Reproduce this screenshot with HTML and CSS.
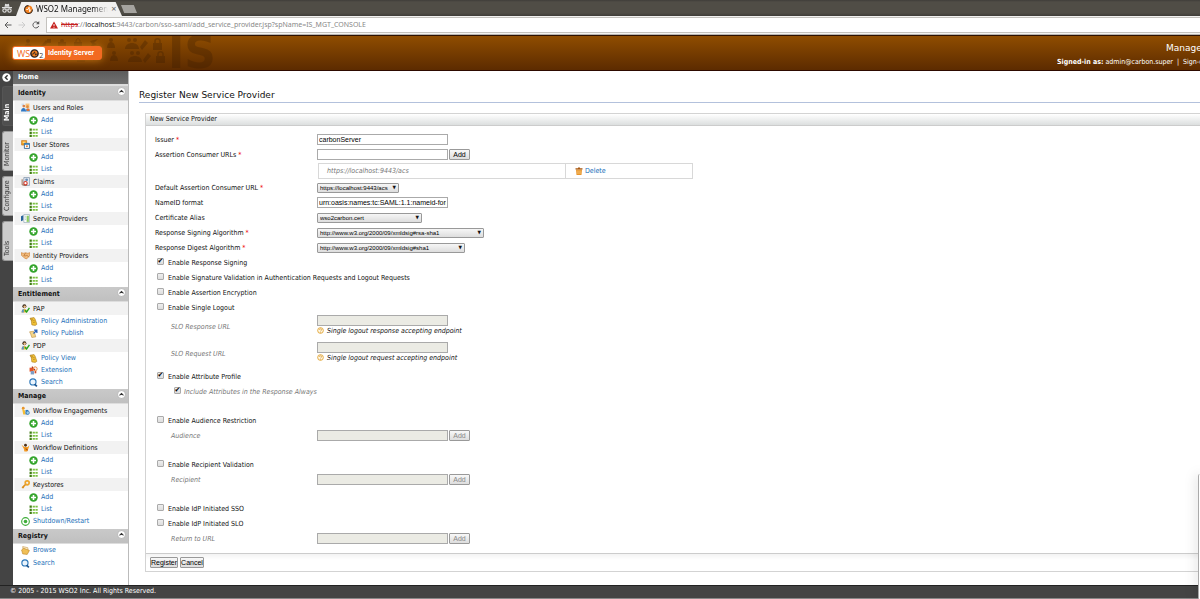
FILE: index.html
```
<!DOCTYPE html>
<html lang="en">

<head>
    <meta charset="UTF-8">
    <meta name="viewport" content="width=device-width, initial-scale=1.0">
    <title>WSO2 Management Console</title>
    <link rel="stylesheet" href="styles.css">
</head>

<body>
    <!-- icon set -->
    <svg class="sprite" aria-hidden="true">
        <symbol id="i-add" viewBox="0 0 16 16"><circle cx="8" cy="8" r="7.5" fill="#35a52d"/><path d="M8 3.5v9M3.5 8h9" stroke="#fff" stroke-width="2.8"/></symbol>
        <symbol id="i-list" viewBox="0 0 16 16"><path d="M1 1h4v4H1zM1 6.5h4v4H1zM1 12h4v4H1z" fill="#3f7d10"/><path d="M6.500 1.500h4v3h-4zM11.500 1.500h4v3h-4zM6.500 7h4v3h-4zM11.500 7h4v3h-4zM6.500 12.500h4v3h-4zM11.500 12.500h4v3h-4z" fill="#7cc142"/></symbol>
        <symbol id="i-users" viewBox="0 0 16 16"><path d="M8 1h7v8H8z" fill="#f9c27c"/><path d="M1 1h4v3H1z" fill="#c8dcf0"/><circle cx="5" cy="5.500" r="2.500" fill="#d9824a"/><path d="M0 15c0-8 9-8 9 0z" fill="#2f78c4"/><circle cx="11.500" cy="6.500" r="2.300" fill="#e08a3a"/><path d="M8 15c0-7 8-7 8 0z" fill="#4d9be0"/><path d="M10 10h5v4h-5z" fill="#ee6f24"/></symbol>
        <symbol id="i-stores" viewBox="0 0 16 16"><path d="M1 1h9v8H1z" fill="#f4a21f" stroke="#b96a10"/><path d="M3 3h5v2H3z" fill="#fde3a5"/><path d="M6 6h9v9H6z" fill="#fff" stroke="#2b5f8f" stroke-width="1.500"/><path d="M6 6h9v2.500H6z" fill="#2b78b8"/><circle cx="10.500" cy="11" r="1.800" fill="#e08338"/></symbol>
        <symbol id="i-claims" viewBox="0 0 16 16"><path d="M5 1h10v14H5z" fill="#e8eef5" stroke="#5b7590"/><circle cx="10" cy="5" r="2.500" fill="#678bb3"/><path d="M2 4v10l8 1" fill="none" stroke="#8b5a3c" stroke-width="1.500"/><circle cx="8" cy="11" r="3" fill="#fff" stroke="#d43b2a" stroke-width="2"/></symbol>
        <symbol id="i-sp" viewBox="0 0 16 16"><path d="M5 1h10v14H5z" fill="#fff" stroke="#7d9aa8"/><path d="M10 3h4v11h-4z" fill="#8ccb62"/><path d="M7 4h2M7 7h2M7 10h2" stroke="#8aa"/><path d="M0 4l4-2v9l-4 2z" fill="#27639c"/></symbol>
        <symbol id="i-idp" viewBox="0 0 16 16"><path d="M0 3l5 1 3-1 4 1 4-1-1 6-5 5-3-1-6-5z" fill="#f3bd7e" stroke="#c4762a"/><path d="M8 4L5 8l3 1 2-2 4 4" fill="none" stroke="#9e5415"/></symbol>
        <symbol id="i-pap" viewBox="0 0 16 16"><circle cx="6" cy="4" r="3.500" fill="#3b2a18"/><circle cx="6.500" cy="5" r="2.200" fill="#f2c38e"/><path d="M1 15c0-8 10-8 10 0z" fill="#e9b73c"/><path d="M1 15c0-4 2-6 4-6v6z" fill="#5c93c4"/><path d="M7 11l3 3 5-7" fill="none" stroke="#1fa51f" stroke-width="2.500"/></symbol>
        <symbol id="i-policy" viewBox="0 0 16 16"><path d="M2 2l7-1 2 3 3 9-3 2-6-1-1-8z" fill="#f0c136" stroke="#a8771a"/><path d="M2 2l2 4 2-1-1-3M6 7l4-1M7 10l4-1" fill="none" stroke="#a8771a"/></symbol>
        <symbol id="i-publish" viewBox="0 0 16 16"><path d="M1 5l7-1 2 3 2 7-7 1-2-6z" fill="#f3d489" stroke="#b98a38"/><path d="M8 8l5-5M9 2h5v5" fill="none" stroke="#2b62b8" stroke-width="2.200"/></symbol>
        <symbol id="i-ext" viewBox="0 0 16 16"><path d="M1 3h7v7H1z" fill="#e2562b"/><path d="M5 1h2v3H5zM8 5h3v2H8z" fill="#a92f17"/><circle cx="11" cy="5" r="3.500" fill="none" stroke="#e27a2a" stroke-width="1.500"/><path d="M3 9h6v6H3z" fill="#7d9fc6"/><path d="M10 9h3v4h-3z" fill="#d04a24"/></symbol>
        <symbol id="i-search" viewBox="0 0 16 16"><circle cx="7" cy="7" r="5.500" fill="#eaf4fd" stroke="#2a76b9" stroke-width="2"/><path d="M10 11l4 4" stroke="#1c5590" stroke-width="3"/></symbol>
        <symbol id="i-wfe" viewBox="0 0 16 16"><circle cx="4" cy="4" r="2.500" fill="#e8952a"/><path d="M2 5l5 3 1 7H4z" fill="#f5bd33"/><path d="M8 7h5v8H8z" fill="#2f7cc0"/><circle cx="12" cy="12" r="3" fill="#9acbe8" stroke="#276aa5"/></symbol>
        <symbol id="i-wfd" viewBox="0 0 16 16"><circle cx="8" cy="4" r="2.500" fill="#4b2f18"/><path d="M1 3l5 4h6l3-3-2 6-2 5H6L5 10z" fill="#f39a22"/><path d="M8 10l4 3" stroke="#b3540d" stroke-width="2"/></symbol>
        <symbol id="i-key" viewBox="0 0 16 16"><circle cx="11" cy="5" r="3.500" fill="none" stroke="#eda52b" stroke-width="3"/><path d="M8 8l-6 6M3 12l2 2" stroke="#dd8f1c" stroke-width="2.800"/></symbol>
        <symbol id="i-power" viewBox="0 0 16 16"><circle cx="8" cy="8" r="6.800" fill="#fff" stroke="#3fae3a" stroke-width="2"/><circle cx="8" cy="8" r="3.200" fill="#3fae3a"/></symbol>
        <symbol id="i-browse" viewBox="0 0 16 16"><path d="M3 1l9 2 1 7-9-1z" fill="#fff3cf" stroke="#be8b3b"/><path d="M1 7l4-3 10 4-4 7-8-1z" fill="#f0bf56" stroke="#b98126"/></symbol>
        <symbol id="i-trash" viewBox="0 0 16 16"><path d="M2 5h12l-1 11H3z" fill="#e8952c"/><path d="M1 2.500h14V5H1zM6 1h4v2H6z" fill="#a65712"/><path d="M6 7v7M10 7v7" stroke="#fbd28c" stroke-width="1.500"/></symbol>
        <symbol id="i-help" viewBox="0 0 16 16"><circle cx="8" cy="8" r="6.500" fill="#fff8e6" stroke="#e0a02a" stroke-width="2"/><path d="M5.500 6.500c0-3 5-3 5 0 0 2-2.500 1.500-2.500 3.500M8 11v2" fill="none" stroke="#cf8a18" stroke-width="1.500"/></symbol>
        <symbol id="i-up" viewBox="0 0 16 16"><circle cx="8" cy="8" r="7" fill="#fff" stroke="#999"/><path d="M4.500 9.500L8 6l3.500 3.500" fill="none" stroke="#333" stroke-width="1.800"/></symbol>
    </svg>

    <div class="tab-bar">
        <svg class="incognito" viewBox="0 0 16 16"><path d="M4 6l1-5 3 1 3-1 1 5zM0 6.500h16v2H0z" fill="#ddd"/><circle cx="4" cy="12" r="2.700" fill="none" stroke="#ddd" stroke-width="1.800"/><circle cx="12" cy="12" r="2.700" fill="none" stroke="#ddd" stroke-width="1.800"/><path d="M6 11h4" stroke="#ddd" stroke-width="1.500"/></svg>
        <div class="browser-tab">
            <svg class="favicon" viewBox="0 0 16 16"><circle cx="8" cy="8" r="7" fill="#f58220"/><path d="M8 1a7 7 0 1 0 7 7" fill="none" stroke="#3a2a20" stroke-width="2"/><path d="M4 8h3l2-4 1 8 2-4" fill="none" stroke="#fff" stroke-width="1.500"/></svg>
            <span class="tab-title">WSO2 Managemen</span>
            <span class="tab-close">×</span>
        </div>
        <div class="new-tab"></div>
    </div>
    <div class="toolbar">
        <svg class="nav-icon" viewBox="0 0 16 16"><path d="M15 8H2M8 2L2 8l6 6" fill="none" stroke="#5a5a5a" stroke-width="2"/></svg>
        <svg class="nav-icon" viewBox="0 0 16 16"><path d="M1 8h13M8 2l6 6-6 6" fill="none" stroke="#ccc" stroke-width="2"/></svg>
        <svg class="nav-icon" viewBox="0 0 16 16"><path d="M13.500 10A6 6 0 1 1 12 3.500" fill="none" stroke="#5a5a5a" stroke-width="2"/><path d="M14.500 0v6.500H8z" fill="#5a5a5a"/></svg>
        <div class="address">
            <svg class="warning" viewBox="0 0 16 16"><path d="M8 1l8 14H0z" fill="#c5221f"/><path d="M8 6v4M8 11.500v2" stroke="#fff" stroke-width="1.800"/></svg>
            <span><s>https</s>://<b>localhost</b>:9443/carbon/sso-saml/add_service_provider.jsp?spName=IS_MGT_CONSOLE</span>
        </div>
    </div>

    <header class="header">
        <div class="watermark">
            <svg viewBox="0 0 156 34">
                <g id="marks" fill="#3a1c00">
                    <circle cx="16" cy="5" r="2"/><path d="M12 12c0-6 8-6 8 0zM28 11l6-7 2 2-6 7zM35 3h4v4h-4zM46 6h8v6h-8z"/><circle cx="50" cy="5" r="2"/><path d="M62 6h8v7h-8z"/><path d="M64 7V5c0-3 4-3 4 0v2" fill="none" stroke="#3a1c00"/><path d="M78 5l8-2-4 4 3 1-7 4 2-4z"/>
                    <circle cx="99" cy="4" r="2"/><path d="M95 12c0-8 8-8 8 0z"/>
                    <circle cx="117" cy="4" r="2"/><circle cx="123" cy="4" r="2"/><path d="M113 13c0-8 14-8 14 0zM128 11l5-7 3 3-6 7zM141 7h9v7h-9z"/><path d="M143 7V5c0-3 5-3 5 0v2" fill="none" stroke="#3a1c00" stroke-width="1.500"/>
                </g>
                <use href="#marks" x="3" y="13"/>
            </svg>
            <span>IS</span>
        </div>
        <a class="logo" href="#">
            <span class="logo-mark">WS<svg viewBox="0 0 16 16"><circle cx="8" cy="8" r="6.500" fill="#f58220" stroke="#2d2420" stroke-width="2.500"/><path d="M2 9h4l2-4 2 6 1-2h3" fill="none" stroke="#2d2420" stroke-width="1.500"/></svg><sub>2</sub></span>
            <span class="logo-name">Identity Server</span>
        </a>
        <div class="account">
            <div class="product">Management Console</div>
            <div class="signed"><strong>Signed-in as:</strong> admin@carbon.super <i>|</i> <a href="#">Sign-out</a></div>
        </div>
    </header>

    <div class="page">
        <nav class="side-tabs">
            <button class="collapse" aria-label="Collapse menu"><svg viewBox="0 0 16 16"><circle cx="8" cy="8" r="7.500" fill="#fff"/><path d="M10 4L6 8l4 4" fill="none" stroke="#333" stroke-width="2.500"/></svg></button>
            <a class="side-tab active" href="#">Main</a>
            <a class="side-tab" href="#">Monitor</a>
            <a class="side-tab" href="#">Configure</a>
            <a class="side-tab" href="#">Tools</a>
        </nav>

        <nav class="menu">
            <a class="home" href="#">Home</a>
            <section>
                <h3>Identity <svg><use href="#i-up"/></svg></h3>
                <ul>
                    <li class="group"><svg><use href="#i-users"/></svg>Users and Roles</li>
                    <li><a href="#"><svg><use href="#i-add"/></svg>Add</a></li>
                    <li><a href="#"><svg><use href="#i-list"/></svg>List</a></li>
                    <li class="group"><svg><use href="#i-stores"/></svg>User Stores</li>
                    <li><a href="#"><svg><use href="#i-add"/></svg>Add</a></li>
                    <li><a href="#"><svg><use href="#i-list"/></svg>List</a></li>
                    <li class="group"><svg><use href="#i-claims"/></svg>Claims</li>
                    <li><a href="#"><svg><use href="#i-add"/></svg>Add</a></li>
                    <li><a href="#"><svg><use href="#i-list"/></svg>List</a></li>
                    <li class="group"><svg><use href="#i-sp"/></svg>Service Providers</li>
                    <li><a href="#"><svg><use href="#i-add"/></svg>Add</a></li>
                    <li><a href="#"><svg><use href="#i-list"/></svg>List</a></li>
                    <li class="group"><svg><use href="#i-idp"/></svg>Identity Providers</li>
                    <li><a href="#"><svg><use href="#i-add"/></svg>Add</a></li>
                    <li><a href="#"><svg><use href="#i-list"/></svg>List</a></li>
                </ul>
            </section>
            <section>
                <h3>Entitlement <svg><use href="#i-up"/></svg></h3>
                <ul>
                    <li class="group"><svg><use href="#i-pap"/></svg>PAP</li>
                    <li><a href="#"><svg><use href="#i-policy"/></svg>Policy Administration</a></li>
                    <li><a href="#"><svg><use href="#i-publish"/></svg>Policy Publish</a></li>
                    <li class="group"><svg><use href="#i-pap"/></svg>PDP</li>
                    <li><a href="#"><svg><use href="#i-policy"/></svg>Policy View</a></li>
                    <li><a href="#"><svg><use href="#i-ext"/></svg>Extension</a></li>
                    <li><a href="#"><svg><use href="#i-search"/></svg>Search</a></li>
                </ul>
            </section>
            <section>
                <h3>Manage <svg><use href="#i-up"/></svg></h3>
                <ul>
                    <li class="group"><svg><use href="#i-wfe"/></svg>Workflow Engagements</li>
                    <li><a href="#"><svg><use href="#i-add"/></svg>Add</a></li>
                    <li><a href="#"><svg><use href="#i-list"/></svg>List</a></li>
                    <li class="group"><svg><use href="#i-wfd"/></svg>Workflow Definitions</li>
                    <li><a href="#"><svg><use href="#i-add"/></svg>Add</a></li>
                    <li><a href="#"><svg><use href="#i-list"/></svg>List</a></li>
                    <li class="group"><svg><use href="#i-key"/></svg>Keystores</li>
                    <li><a href="#"><svg><use href="#i-add"/></svg>Add</a></li>
                    <li><a href="#"><svg><use href="#i-list"/></svg>List</a></li>
                    <li class="top"><a href="#"><svg><use href="#i-power"/></svg>Shutdown/Restart</a></li>
                </ul>
            </section>
            <section>
                <h3>Registry <svg><use href="#i-up"/></svg></h3>
                <ul>
                    <li class="top"><a href="#"><svg><use href="#i-browse"/></svg>Browse</a></li>
                    <li class="top"><a href="#"><svg><use href="#i-search"/></svg>Search</a></li>
                </ul>
            </section>
        </nav>

        <main class="content">
            <h1>Register New Service Provider</h1>
            <form class="panel">
                <h2>New Service Provider</h2>
                <div class="fields">
                    <div class="row"><label for="issuer">Issuer <em>*</em></label><input type="text" id="issuer" value="carbonServer"></div>
                    <div class="row"><label for="acs">Assertion Consumer URLs <em>*</em></label><input type="text" id="acs"><button type="button">Add</button></div>
                    <table class="urls">
                        <tr>
                            <td>https://localhost:9443/acs</td>
                            <td><a href="#"><svg><use href="#i-trash"/></svg>Delete</a></td>
                        </tr>
                    </table>
                    <div class="row"><label for="default-acs">Default Assertion Consumer URL <em>*</em></label><span class="select"><select id="default-acs"><option>https://localhost:9443/acs</option></select></span></div>
                    <div class="row"><label for="nameid">NameID format</label><input type="text" id="nameid" value="urn:oasis:names:tc:SAML:1.1:nameid-format:emailAddress"></div>
                    <div class="row"><label for="alias">Certificate Alias</label><span class="select alias"><select id="alias"><option>wso2carbon.cert</option></select></span></div>
                    <div class="row"><label for="signing">Response Signing Algorithm <em>*</em></label><span class="select signing"><select id="signing"><option>http://www.w3.org/2000/09/xmldsig#rsa-sha1</option></select></span></div>
                    <div class="row"><label for="digest">Response Digest Algorithm <em>*</em></label><span class="select digest"><select id="digest"><option>http://www.w3.org/2000/09/xmldsig#sha1</option></select></span></div>
                    <div class="check"><input type="checkbox" id="c1" checked><label for="c1">Enable Response Signing</label></div>
                    <div class="check"><input type="checkbox" id="c2"><label for="c2">Enable Signature Validation in Authentication Requests and Logout Requests</label></div>
                    <div class="check"><input type="checkbox" id="c3"><label for="c3">Enable Assertion Encryption</label></div>
                    <div class="check"><input type="checkbox" id="c4"><label for="c4">Enable Single Logout</label></div>
                    <div class="row sub tall"><label for="slo-res">SLO Response URL</label><div><input type="text" id="slo-res" disabled><p class="help"><svg><use href="#i-help"/></svg>Single logout response accepting endpoint</p></div></div>
                    <div class="row sub tall"><label for="slo-req">SLO Request URL</label><div><input type="text" id="slo-req" disabled><p class="help"><svg><use href="#i-help"/></svg>Single logout request accepting endpoint</p></div></div>
                    <div class="check"><input type="checkbox" id="c5" checked><label for="c5">Enable Attribute Profile</label></div>
                    <div class="check nested spaced"><input type="checkbox" id="c6" checked><label for="c6">Include Attributes in the Response Always</label></div>
                    <div class="check"><input type="checkbox" id="c7"><label for="c7">Enable Audience Restriction</label></div>
                    <div class="row sub spaced"><label for="audience">Audience</label><input type="text" id="audience" disabled><button type="button" disabled>Add</button></div>
                    <div class="check"><input type="checkbox" id="c8"><label for="c8">Enable Recipient Validation</label></div>
                    <div class="row sub spaced"><label for="recipient">Recipient</label><input type="text" id="recipient" disabled><button type="button" disabled>Add</button></div>
                    <div class="check"><input type="checkbox" id="c9"><label for="c9">Enable IdP Initiated SSO</label></div>
                    <div class="check"><input type="checkbox" id="c10"><label for="c10">Enable IdP Initiated SLO</label></div>
                    <div class="row sub"><label for="return">Return to URL</label><input type="text" id="return" disabled><button type="button" disabled>Add</button></div>
                </div>
                <div class="actions">
                    <button type="submit">Register</button>
                    <button type="button">Cancel</button>
                </div>
            </form>
        </main>
    </div>

    <footer class="footer">© 2005 - 2015 WSO2 Inc. All Rights Reserved.</footer>
    <div class="window-edge"></div>
</body>

</html>
```

FILE: styles.css
```
* {
    box-sizing: border-box;
}

body {
    margin: 0;
    position: relative;
    display: flex;
    flex-direction: column;
    min-height: 100vh;
    overflow: hidden;
    background: #fff;
    color: #111;
    font-family: "DejaVu Sans Condensed", "DejaVu Sans", Verdana, sans-serif;
    font-size: 7px;
    line-height: 12px;
}

h1,
h2,
h3,
p,
ul {
    margin: 0;
    padding: 0;
    font-weight: normal;
    list-style: none;
}

a {
    color: #1b6fb8;
    text-decoration: none;
}

svg {
    flex: none;
}

.sprite {
    position: absolute;
    width: 0;
    height: 0;
}

/* browser chrome */
.tab-bar {
    display: flex;
    height: 16px;
    padding-left: 2px;
    background: linear-gradient(#3f3d39, #504d46 2px, #504d46 13px, #3f3d39);
    font-family: "Noto Sans", sans-serif;
}

.incognito {
    width: 10px;
    height: 10px;
    margin-top: 3px;
}

.browser-tab {
    display: flex;
    align-items: center;
    gap: 3px;
    width: 106px;
    margin: 2px 0 0 4px;
    padding: 0 8px;
    background: #f2f1f0;
    clip-path: polygon(5% 0, 94% 0, 100% 100%, 0 100%);
}

.favicon {
    width: 9px;
    height: 9px;
}

.tab-title {
    flex: 1;
    white-space: nowrap;
    font-size: 8px;
    mask-image: linear-gradient(90deg, #000 80%, transparent);
}

.tab-close {
    color: #666;
    font-size: 9px;
}

.new-tab {
    width: 16px;
    height: 8px;
    margin: 5px 0 0 -1px;
    background: #a5a39f;
    clip-path: polygon(0 0, 80% 0, 100% 100%, 20% 100%);
}

.toolbar {
    display: flex;
    align-items: center;
    gap: 6px;
    height: 19px;
    padding-left: 4px;
    border-bottom: 1px solid #b8b5b0;
    background: #f2f1f0;
}

.nav-icon {
    width: 8px;
    height: 8px;
}

.address {
    flex: 1;
    display: flex;
    align-items: center;
    gap: 3px;
    height: 16px;
    padding-left: 3px;
    border: 1px solid #c4c2be;
    border-right: 0;
    background: #fff;
    color: #888;
    font-family: "Noto Sans", sans-serif;
    font-size: 7px;
}

.address s {
    color: #c5221f;
}

.address b {
    color: #222;
    font-weight: normal;
}

.warning {
    width: 8px;
    height: 8px;
}

/* product header */
.header {
    position: relative;
    display: flex;
    justify-content: space-between;
    height: 36px;
    border-top: 1px solid #2d1000;
    border-bottom: 1px solid #2d0a00;
    background: linear-gradient(#8f4d00, #5c2b00);
    color: #fff;
}

.logo {
    z-index: 1;
    align-self: center;
    display: flex;
    height: 14px;
    margin-left: 12px;
    border: 1px solid #f26a21;
    border-radius: 3px;
    background: #f26a21;
    box-shadow: 0 0 8px #c97a14;
    color: #fff;
    line-height: 13px;
}

.logo-mark {
    display: flex;
    align-items: center;
    width: 32px;
    padding-left: 4px;
    border-radius: 2px;
    background: #fff;
    color: #f26a21;
    font-family: "Open Sans", sans-serif;
    font-size: 9px;
}

.logo-mark svg {
    width: 9px;
    height: 9px;
}

.logo-mark sub {
    align-self: flex-end;
    color: #333;
    font-size: 7px;
    line-height: 7px;
}

.logo-name {
    width: 56px;
    padding-left: 3px;
    font-family: Roboto, "Liberation Sans", sans-serif;
    font-size: 7px;
    font-weight: bold;
    white-space: nowrap;
}

/* faint pattern behind the logo */
.watermark {
    position: absolute;
    left: 12px;
    top: 0;
    display: flex;
    height: 34px;
    overflow: hidden;
    color: #3a1c00;
    font-family: "DejaVu Sans", sans-serif;
    font-size: 44px;
    font-weight: bold;
    line-height: 34px;
    opacity: .3;
}

.watermark svg {
    width: 156px;
    height: 34px;
}

.account {
    width: 143px;
    padding-top: 5px;
    overflow: hidden;
    white-space: nowrap;
}

.account a {
    color: #fff;
}

.account i {
    margin: 0 2px;
    font-style: normal;
}

.product {
    padding-left: 109px;
    font-family: "DejaVu Sans", sans-serif;
    font-size: 9px;
    line-height: 14px;
}

.signed {
    line-height: 14px;
}

/* left side */
.page {
    flex: 1;
    display: flex;
}

.side-tabs {
    display: flex;
    flex-direction: column;
    gap: 5px;
    width: 13px;
    padding: 2px 0 0 2px;
    background: #444;
}

.collapse {
    height: 8px;
    padding: 0;
    border: 0;
    background: none;
}

.collapse svg {
    display: block;
    width: 9px;
    height: 9px;
}

.side-tab {
    height: 40px;
    padding-top: 4px;
    border: 1px solid #999;
    border-left: 0;
    border-radius: 0 3px 3px 0;
    background: #ccc;
    color: #333;
    line-height: 9px;
    writing-mode: vertical-rl;
    transform: rotate(180deg);
}

.side-tab.active {
    border-color: #555;
    background: #4f4f4f;
    color: #fff;
    font-weight: bold;
}

.menu {
    width: 116px;
    border-right: 1px solid #bbb;
}

.home {
    display: block;
    height: 15px;
    padding-left: 5px;
    border-bottom: 2px solid #ddd;
    background: linear-gradient(#5c5c5c, #707070);
    color: #fff;
    font-weight: bold;
}

.menu section {
    margin-bottom: 1px;
}

.menu h3 {
    display: flex;
    justify-content: space-between;
    height: 15px;
    padding: 0 2px 0 5px;
    border-bottom: 1px solid #ddd;
    background: linear-gradient(#c9c9c9, #c0c0c0);
    font-size: 7px;
    font-weight: bold;
    line-height: 14px;
}

.menu h3 svg {
    width: 9px;
    height: 9px;
    margin-top: 1px;
}

.menu li {
    height: 12px;
    padding-left: 16px;
}

.menu li.group {
    height: 13px;
    padding-left: 8px;
    background: linear-gradient(90deg, #fff 1px, #f2f2f2 2px);
}

.menu li.top {
    height: 13px;
    padding-left: 8px;
}

.menu li.group,
.menu li a {
    display: flex;
    align-items: center;
    gap: 3px;
    white-space: nowrap;
}

.menu li svg {
    width: 9px;
    height: 9px;
}

/* form */
.content {
    flex: 1;
    min-width: 0;
    padding: 18px 0 13px 10px;
}

h1 {
    border-bottom: 1px solid #b3c1dc;
    font-family: "DejaVu Sans", sans-serif;
    font-size: 9px;
    line-height: 13px;
}

.panel {
    margin: 10px 0 0 6px;
    border: 1px solid #d3d3d3;
    border-right: 0;
}

h2 {
    height: 12px;
    padding-left: 4px;
    border-bottom: 1px solid #ccc;
    background: linear-gradient(#fff, #dcdfdf);
    font-size: 7px;
    line-height: 10px;
}

.fields {
    padding: 6px 9px 7px;
}

.row {
    display: flex;
    align-items: center;
    height: 15px;
}

.row > label {
    width: 162px;
}

.row.sub > label {
    padding-left: 16px;
    color: #777;
    font-style: italic;
}

.row.tall {
    align-items: flex-start;
    height: 27px;
}

.row.tall > label {
    padding-top: 6px;
}

.spaced {
    margin-bottom: 14px;
}

em {
    color: #e00;
    font-style: normal;
}

input,
select,
button {
    font-family: "Liberation Sans", Arial, sans-serif;
    font-size: 7px;
    color: #000;
}

input[type="text"] {
    display: block;
    width: 131px;
    height: 11px;
    padding: 0 1px;
    border: 1px solid #aaa;
    background: #fff;
}

input[type="text"]:disabled {
    background: #ebebe4;
}

.fields button,
.actions button {
    height: 11px;
    padding: 0 3px;
    border: 1px solid #999;
    border-radius: 1px;
    background: linear-gradient(#f8f8f8, #ddd);
    line-height: 9px;
}

.fields button {
    width: 21px;
    margin-left: 1px;
}

.fields button:disabled {
    color: #888;
}

.urls {
    width: 375px;
    height: 16px;
    margin: 1px 0 1px 163px;
    border-collapse: collapse;
}

.urls td {
    padding: 0 8px;
    border: 1px solid #d8d8d8;
    color: #777;
    font-style: italic;
}

.urls td:last-child {
    width: 127px;
    padding-left: 9px;
    font-style: normal;
}

.urls a {
    display: flex;
    align-items: center;
    gap: 2px;
}

.urls svg {
    width: 8px;
    height: 8px;
}

.select {
    position: relative;
    width: 82px;
    height: 10px;
}

.select.alias {
    width: 105px;
}

.select.signing {
    width: 167px;
}

.select.digest {
    width: 148px;
}

.select select {
    display: block;
    width: 100%;
    height: 10px;
    padding: 0 2px;
    border: 1px solid #999;
    border-radius: 1px;
    background: linear-gradient(#f6f6f6, #ddd);
    font-size: 6px;
    appearance: none;
}

.select::after {
    content: "▼";
    position: absolute;
    right: 3px;
    top: 0;
    font-size: 5px;
    line-height: 9px;
    pointer-events: none;
}

.check {
    display: flex;
    align-items: center;
    gap: 4px;
    height: 15px;
    padding-left: 2px;
}

.check.nested {
    padding-left: 19px;
    gap: 3px;
    color: #777;
    font-style: italic;
}

.check input {
    display: flex;
    align-items: center;
    justify-content: center;
    width: 7px;
    height: 7px;
    margin: 0 0 2px;
    border: 1px solid #aaa;
    border-radius: 1px;
    background: linear-gradient(#eee, #ddd);
    appearance: none;
}

.check input:checked::before {
    content: "✔";
    font-family: "DejaVu Sans", sans-serif;
    font-size: 7px;
    font-style: normal;
    line-height: 7px;
}

.help {
    display: flex;
    align-items: center;
    gap: 3px;
    height: 9px;
    color: #111;
    font-style: italic;
}

.help svg {
    width: 7px;
    height: 7px;
}

.actions {
    display: flex;
    gap: 2px;
    height: 18px;
    padding: 3px 4px;
    border-top: 1px solid #ccc;
    background: linear-gradient(#f3f3f3, #fff 6px);
}

.actions button {
    padding: 0;
}

.footer {
    height: 14px;
    padding-left: 10px;
    border-top: 1px solid #222;
    border-bottom: 1px solid #888;
    background: #444;
    color: #fff;
    line-height: 10px;
}

/* edge of the window in front */
.window-edge {
    position: absolute;
    right: 0;
    bottom: 0;
    width: 2px;
    height: 125px;
    border-left: 1px solid #aaa;
    border-top-left-radius: 2px;
    background: #fff;
    box-shadow: 0 0 12px rgba(0, 0, 0, .4);
}
```
